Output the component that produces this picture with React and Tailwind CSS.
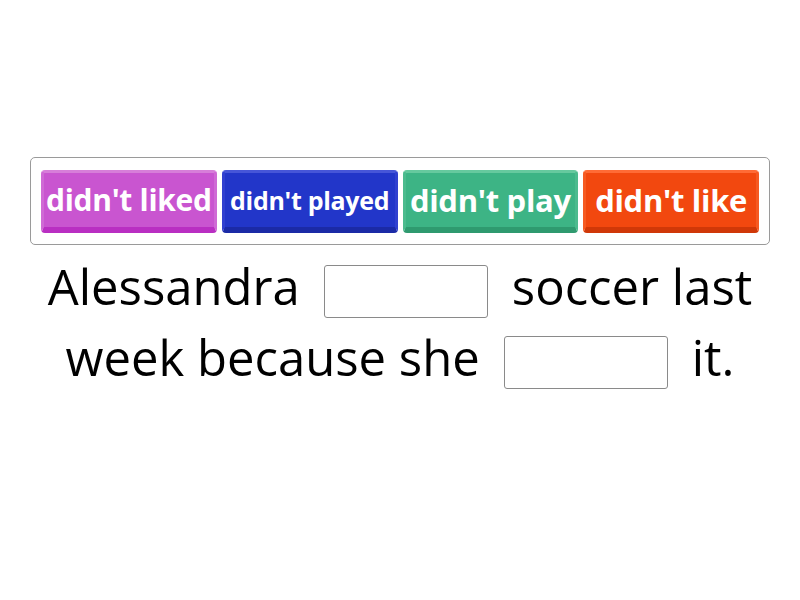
import React from 'react'

const tiles = [
    { label: "didn't liked", size: 'text-[30px]', cls: 'bg-[#c955d0] border-t-[#d77ed9] border-x-[#cf6ad5] border-b-[#b92fc2]' },
    { label: "didn't played", size: 'text-[25px]', cls: 'bg-[#2236c9] border-t-[#4656d8] border-x-[#3040d0] border-b-[#1b2aa6]' },
    { label: "didn't play", size: 'text-[31px]', cls: 'bg-[#3db485] border-t-[#66c99e] border-x-[#4cbb8e] border-b-[#2f9a6f]' },
    { label: "didn't like", size: 'text-[31px]', cls: 'bg-[#f2480f] border-t-[#ff6b36] border-x-[#f65a22] border-b-[#d03808]' },
]

const Blank = () => (
    <span className="inline-block w-[164px] h-[53px] mx-[24px] align-middle border border-[#8a8a8a] rounded-[3px] bg-white" />
)

export default function App() {
    return (
        <div className="w-[800px] h-[600px] bg-white font-['Open_Sans',sans-serif] pt-[157px] px-[30px]">
            {/* word tiles */}
            <div className="flex gap-[5px] border border-[#9a9a9a] rounded-[5px] px-[10px] pt-[12px] pb-[11px]">
                {tiles.map((t) => (
                    <div
                        key={t.label}
                        className={`w-[176px] h-[63px] rounded-[4px] border-x-[3px] border-t-[3px] border-b-[6px] flex items-center justify-center text-white font-bold whitespace-nowrap leading-none tracking-[-0.3px] ${t.size} ${t.cls}`}
                    >
                        {t.label}
                    </div>
                ))}
            </div>

            {/* sentence */}
            <p className="mt-[6px] text-center text-[49px] leading-[71px] text-black">
                Alessandra
                <Blank />
                soccer last week because she
                <Blank />
                it.
            </p>
        </div>
    )
}
